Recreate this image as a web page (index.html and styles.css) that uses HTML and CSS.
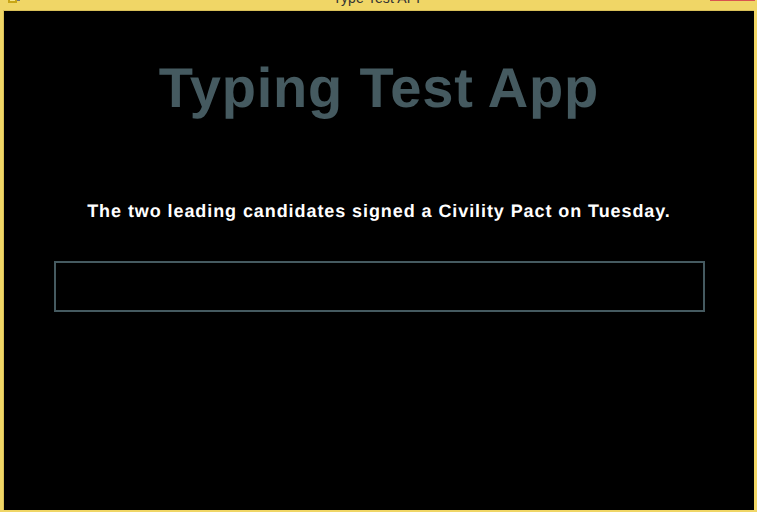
FILE: index.html
```html
<!DOCTYPE html>
<html lang="en">
<head>
    <meta charset="UTF-8">
    <meta name="viewport" content="width=device-width, initial-scale=1.0">
    <title>Typing Test App</title>
    <link rel="stylesheet" href="styles.css">
</head>
<body>
    <div class="titlebar">
        <svg class="app-icon" width="12" height="4" viewBox="0 0 12 4">
            <rect x="0" y="0" width="9" height="3" fill="#c9a616"/>
            <rect x="2" y="0" width="5" height="1" fill="#f5e58a"/>
            <rect x="9" y="0" width="3" height="1" fill="#777"/>
        </svg>
        <span class="window-title">Type Test APP</span>
        <span class="close-btn"></span>
    </div>
    <div class="window">
        <h1>Typing Test App</h1>
        <p class="sentence">The two leading candidates signed a Civility Pact on Tuesday.</p>
        <input class="type-box" type="text">
    </div>
</body>
</html>
```

FILE: styles.css
```css
html, body {
    margin: 0;
    padding: 0;
}
body {
    width: 757px;
    height: 512px;
    overflow: hidden;
    background: #f0d666;
    display: flex;
    flex-direction: column;
    font-family: "Liberation Sans", Arial, sans-serif;
}
.titlebar {
    height: 10px;
    position: relative;
    overflow: hidden;
    flex: none;
}
.app-icon {
    position: absolute;
    left: 8px;
    top: 0;
}
.window-title {
    position: absolute;
    left: 333px;
    top: -9px;
    font-size: 14px;
    line-height: 14px;
    letter-spacing: 0.15px;
    color: #333;
}
.close-btn {
    position: absolute;
    right: 2px;
    top: 0;
    width: 45px;
    height: 1px;
    background: #d9534f;
}
.window {
    flex: 1;
    margin: 0 3px 2px 3px;
    border-top: 1px solid #d8bf58;
    border-left: 1px solid #d8bf58;
    background: #000;
    display: flex;
    flex-direction: column;
    align-items: center;
}
h1 {
    margin: 44px 0 0;
    font-size: 56px;
    line-height: 66px;
    font-weight: bold;
    letter-spacing: 0.8px;
    text-rendering: geometricPrecision;
    color: #455a60;
}
.sentence {
    margin: 78px 0 0;
    font-size: 18px;
    line-height: 24px;
    font-weight: bold;
    letter-spacing: 0.92px;
    text-rendering: geometricPrecision;
    color: #fff;
}
.type-box {
    box-sizing: border-box;
    width: 651px;
    height: 51px;
    margin: 38px 0 0;
    background: #000;
    border: 2px solid #455a60;
    outline: none;
}
```
